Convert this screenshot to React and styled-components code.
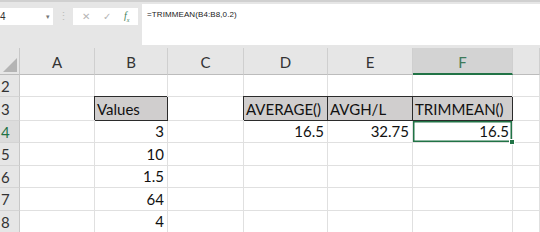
import React from 'react'
import styled, {createGlobalStyle} from 'styled-components'

const GlobalStyle = createGlobalStyle`
  html, body {
    margin: 0;
    padding: 0;
    background: #ffffff;
    overflow: hidden;
  }
  body {
    font-family: Lato, "Liberation Sans", sans-serif;
  }
`

// G is cut off at the right edge, so its letter is not shown
const columns = [
  {name: '', width: 20},
  {name: 'A', width: 75},
  {name: 'B', width: 73},
  {name: 'C', width: 76},
  {name: 'D', width: 84},
  {name: 'E', width: 85},
  {name: 'F', width: 100},
  {name: 'G', width: 27, hidden: true},
]

const rows = [
  {num: 2, height: 22, cells: {}},
  {
    num: 3,
    height: 24,
    cells: {
      B: {text: 'Values', head: true},
      D: {text: 'AVERAGE()', head: true},
      E: {text: 'AVGH/L', head: true},
      F: {text: 'TRIMMEAN()', head: true},
    },
  },
  {
    num: 4,
    height: 22,
    cells: {
      B: {text: '3', num: true},
      D: {text: '16.5', num: true},
      E: {text: '32.75', num: true},
      F: {text: '16.5', num: true, selected: true},
    },
  },
  {num: 5, height: 23, cells: {B: {text: '10', num: true}}},
  {num: 6, height: 22, cells: {B: {text: '1.5', num: true}}},
  {num: 7, height: 23, cells: {B: {text: '64', num: true}}},
  {num: 8, height: 22, cells: {B: {text: '4', num: true}}},
]

function FormulaArea() {
  return (
    <FormulaBar>
      <NameBox>
        <span>4</span>
        <Caret>▾</Caret>
      </NameBox>
      <Grip>⋮</Grip>
      <ButtonBox>
        <ToolGlyph>✕</ToolGlyph>
        <ToolGlyph>✓</ToolGlyph>
        <Fx>f<sub>x</sub></Fx>
      </ButtonBox>
      <FormulaInput>=TRIMMEAN(B4:B8,0.2)</FormulaInput>
    </FormulaBar>
  )
}

function App() {
  const template = columns.map(c => c.width + 'px').join(' ')
  const rowTemplate = ['27px', ...rows.map(r => r.height + 'px')].join(' ')

  return (
    <>
      <GlobalStyle />
      <Page>
        <FormulaArea />
        <Sheet style={{gridTemplateColumns: template, gridTemplateRows: rowTemplate}}>
          <Corner>
            <CornerMark />
          </Corner>
          {columns.slice(1).map(col => (
            <ColHeader key={col.name} $active={col.name === 'F'}>
              {col.hidden ? '' : col.name}
            </ColHeader>
          ))}
          {rows.map(row => (
            <React.Fragment key={row.num}>
              <RowHeader $active={row.num === 4}>{row.num}</RowHeader>
              {columns.slice(1).map(col => {
                const cell = row.cells[col.name]
                return (
                  <Cell
                    key={col.name}
                    $head={cell && cell.head}
                    $num={cell && cell.num}
                    $selected={cell && cell.selected}
                  >
                    {cell ? cell.text : ''}
                  </Cell>
                )
              })}
            </React.Fragment>
          ))}
        </Sheet>
      </Page>
    </>
  )
}

const Page = styled.div`
  width: 540px;
  height: 232px;
  overflow: hidden;
  background: #ffffff;
`

const FormulaBar = styled.div`
  height: 48px;
  box-sizing: border-box;
  background: #e6e6e6;
  border-top: 2px solid #d0d0d0;
  display: flex;
  align-items: flex-start;
  padding-top: 6px;
  font-family: "Liberation Sans", Arial, sans-serif;
`

const NameBox = styled.div`
  width: 53px;
  height: 17px;
  background: #ffffff;
  display: flex;
  align-items: center;
  justify-content: space-between;
  box-sizing: border-box;
  padding: 0 3px 0 0;
  font-size: 10px;
  color: #333;
`

const Caret = styled.span`
  font-size: 7px;
  color: #777;
`

const Grip = styled.div`
  width: 20px;
  text-align: center;
  color: #bdbdbd;
  font-size: 11px;
  line-height: 17px;
`

const ButtonBox = styled.div`
  width: 65px;
  height: 17px;
  background: #ffffff;
  display: flex;
  align-items: center;
  justify-content: space-around;
  padding: 0 2px;
  box-sizing: border-box;
`

const ToolGlyph = styled.span`
  color: #b5b5b5;
  font-size: 10px;
`

const Fx = styled.span`
  color: #3f7f59;
  font-family: "Liberation Serif", serif;
  font-style: italic;
  font-size: 10px;
  sub {
    font-size: 6px;
  }
`

const FormulaInput = styled.div`
  flex: 1;
  margin-left: 4px;
  margin-top: -4px;
  height: 41px;
  background: #ffffff;
  box-sizing: border-box;
  padding: 6px 0 0 5px;
  font-size: 8px;
  color: #222;
  letter-spacing: 0.1px;
`

const Sheet = styled.div`
  display: grid;
  font-family: Lato, "Liberation Sans", sans-serif;
  font-size: 15px;
  color: #111;
`

const Corner = styled.div`
  background: #e6e6e6;
  border-right: 1px solid #c8c8c8;
  border-bottom: 1px solid #bcbcbc;
  position: relative;
`

const CornerMark = styled.div`
  position: absolute;
  right: 2px;
  bottom: 2px;
  width: 0;
  height: 0;
  border-left: 14px solid transparent;
  border-bottom: 14px solid #b4b4b4;
`

const ColHeader = styled.div`
  background: ${p => (p.$active ? '#d3d3d3' : '#e6e6e6')};
  color: ${p => (p.$active ? '#3e7a5a' : '#333')};
  border-right: 1px solid #cfcfcf;
  border-bottom: ${p => (p.$active ? '2px solid #217346' : '1px solid #bcbcbc')};
  display: flex;
  align-items: center;
  justify-content: center;
  padding-top: 2px;
  box-sizing: border-box;
`

const RowHeader = styled.div`
  background: ${p => (p.$active ? '#dcdcdc' : '#e6e6e6')};
  color: ${p => (p.$active ? '#217346' : '#333')};
  border-right: 1px solid #c8c8c8;
  border-bottom: 1px solid #d4d4d4;
  display: flex;
  align-items: center;
  padding-left: 1px;
  box-sizing: border-box;
`

const Cell = styled.div`
  position: relative;
  box-sizing: border-box;
  background: ${p => (p.$head ? '#d0cece' : '#ffffff')};
  border-right: 1px solid ${p => (p.$head ? '#2b2b2b' : '#e0e0e0')};
  border-bottom: 1px solid ${p => (p.$head ? '#2b2b2b' : '#e0e0e0')};
  box-shadow: ${p =>
    p.$head
      ? '-1px -1px 0 0 #2b2b2b'
      : p.$selected
      ? 'inset 0 0 0 1.5px #217346'
      : 'none'};
  display: flex;
  align-items: flex-end;
  justify-content: ${p => (p.$num ? 'flex-end' : 'flex-start')};
  padding: 0 3px 1px 2px;
  line-height: 19px;
  white-space: nowrap;
  ${p =>
    p.$selected &&
    `
    &::after {
      content: '';
      position: absolute;
      right: -3px;
      bottom: -3px;
      width: 4px;
      height: 4px;
      background: #217346;
      border: 1px solid #ffffff;
      z-index: 2;
    }
  `}
`

export default App
